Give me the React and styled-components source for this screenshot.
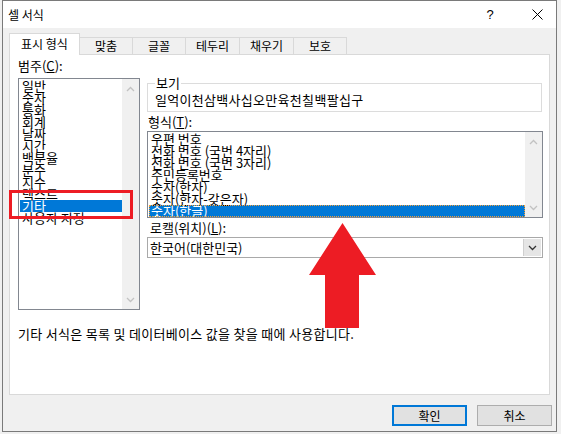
import styled, { createGlobalStyle } from "styled-components";

const categories = [
  "일반",
  "숫자",
  "통화",
  "회계",
  "날짜",
  "시간",
  "백분율",
  "분수",
  "지수",
  "텍스트",
  "기타",
  "사용자 지정",
];

const formats = [
  "우편 번호",
  "전화 번호 (국번 4자리)",
  "전화 번호 (국번 3자리)",
  "주민등록번호",
  "숫자(한자)",
  "숫자(한자-갖은자)",
  "숫자(한글)",
];

const tabs = [
  { label: "표시 형식", width: 71 },
  { label: "맞춤", width: 53 },
  { label: "글꼴", width: 53 },
  { label: "테두리", width: 54 },
  { label: "채우기", width: 54 },
  { label: "보호", width: 53 },
];

function Chevron({ down, color }) {
  return (
    <svg width="9" height="6" viewBox="0 0 9 6">
      <polyline
        points={down ? "1,1 4.5,4.5 8,1" : "1,5 4.5,1.5 8,5"}
        fill="none"
        stroke={color}
        strokeWidth="1.3"
      />
    </svg>
  );
}

function ListBox({ items, selected, height, focused }) {
  return (
    <ListFrame $height={height}>
      <Rows>
        {items.map((item, i) => (
          <Row key={item} $selected={i === selected} $focused={focused && i === selected}>
            {item}
          </Row>
        ))}
      </Rows>
      <ScrollBar>
        <Chevron color="#c2c2c2" />
        <Chevron down color="#c2c2c2" />
      </ScrollBar>
    </ListFrame>
  );
}

function App() {
  return (
    <>
      <GlobalStyle />
      <Window>
        <TitleBar>
          <Title>셀 서식</Title>
          <TitleButtons>
            <TitleButton>?</TitleButton>
            <TitleButton>
              <svg width="11" height="11" viewBox="0 0 11 11">
                <path d="M0.5 0.5 L10.5 10.5 M10.5 0.5 L0.5 10.5" stroke="#000" strokeWidth="1" />
              </svg>
            </TitleButton>
          </TitleButtons>
        </TitleBar>
        <Body>
          <TabRow>
            {tabs.map((tab, i) => (
              <Tab key={tab.label} $active={i === 0} $width={tab.width}>
                {tab.label}
              </Tab>
            ))}
          </TabRow>
          <Panel>
            <TopRow>
              <LeftColumn>
                <Label>
                  범주(<u>C</u>):
                </Label>
                <ListBox items={categories} selected={10} height={232} />
                <Highlight />
              </LeftColumn>
              <RightColumn>
                <SampleGroup>
                  <legend>보기</legend>
                  <SampleText>일억이천삼백사십오만육천칠백팔십구</SampleText>
                </SampleGroup>
                <Label $indent={1} $top={2}>
                  형식(<u>T</u>):
                </Label>
                <ListBox items={formats} selected={6} height={87} focused />
                <Label $indent={3} $top={2}>
                  로캘(위치)(<u>L</u>):
                </Label>
                <Combo>
                  <ComboText>한국어(대한민국)</ComboText>
                  <ComboButton>
                    <Chevron down color="#333" />
                  </ComboButton>
                </Combo>
                <Arrow width="67" height="105" viewBox="0 0 67 105">
                  <polygon points="33.5,0 0,52 16,52 16,105 50,105 50,52 67,52" fill="#ed1c24" />
                </Arrow>
              </RightColumn>
            </TopRow>
            <Description>기타 서식은 목록 및 데이터베이스 값을 찾을 때에 사용합니다.</Description>
          </Panel>
          <ButtonRow>
            <DialogButton $primary>확인</DialogButton>
            <DialogButton>취소</DialogButton>
          </ButtonRow>
        </Body>
      </Window>
    </>
  );
}

const GlobalStyle = createGlobalStyle`
  body {
    margin: 0;
    background: #f0f0f0;
    font-family: "Noto Sans CJK KR", "Noto Sans", sans-serif;
    font-size: 12px;
    color: #000;
  }
`;

const Window = styled.div`
  box-sizing: border-box;
  width: 555px;
  height: 432px;
  margin-left: 2px;
  border: 1px solid #7a7a7a;
  background: #f0f0f0;
  display: flex;
  flex-direction: column;
`;

const TitleBar = styled.div`
  height: 27px;
  background: #fff;
  display: flex;
  align-items: center;
  justify-content: space-between;
  padding-left: 5px;
`;

const Title = styled.span`
  font-size: 12px;
  line-height: 16px;
`;

const TitleButtons = styled.div`
  display: flex;
  gap: 9px;
  height: 100%;
`;

const TitleButton = styled.div`
  width: 38px;
  display: flex;
  align-items: center;
  justify-content: center;
  font-family: "Liberation Sans", sans-serif;
  font-size: 13px;
`;

const Body = styled.div`
  flex: 1;
  padding: 5px 4px 0 6px;
  display: flex;
  flex-direction: column;
`;

const TabRow = styled.div`
  display: flex;
  align-items: flex-end;
  height: 21px;
`;

const Tab = styled.div`
  box-sizing: border-box;
  width: ${({ $width }) => $width}px;
  height: ${({ $active }) => ($active ? 22 : 17)}px;
  margin-bottom: ${({ $active }) => ($active ? -1 : 0)}px;
  border: 1px solid #d9d9d9;
  border-bottom: none;
  border-left: ${({ $active }) => ($active ? "1px solid #d9d9d9" : "none")};
  background: ${({ $active }) => ($active ? "#fff" : "#f0f0f0")};
  position: relative;
  z-index: ${({ $active }) => ($active ? 1 : 0)};
  display: flex;
  align-items: center;
  justify-content: center;
  padding-bottom: ${({ $active }) => ($active ? 2 : 0)}px;
  line-height: 14px;
`;

const Panel = styled.div`
  box-sizing: border-box;
  width: 541px;
  height: 341px;
  border: 1px solid #d9d9d9;
  background: #fff;
  padding: 3px 5px 0 8px;
  display: flex;
  flex-direction: column;
  font-size: 13px;
`;

const TopRow = styled.div`
  display: flex;
  gap: 7px;
`;

const LeftColumn = styled.div`
  width: 122px;
  display: flex;
  flex-direction: column;
  position: relative;
`;

const RightColumn = styled.div`
  width: 396px;
  display: flex;
  flex-direction: column;
  position: relative;
`;

const Label = styled.div`
  line-height: 16px;
  padding-left: ${({ $indent }) => $indent || 0}px;
  margin-top: ${({ $top }) => $top || 0}px;
  margin-bottom: ${({ $top }) => ($top ? 1 : 4)}px;
`;

const ListFrame = styled.div`
  box-sizing: border-box;
  height: ${({ $height }) => $height}px;
  border: 1px solid #828790;
  display: flex;
  overflow: hidden;
`;

const Rows = styled.div`
  flex: 1;
  padding: 1px 0 0 1px;
  min-width: 0;
`;

const Row = styled.div`
  box-sizing: border-box;
  height: 12px;
  line-height: 12px;
  font-size: 13px;
  padding-left: 2px;
  white-space: nowrap;
  background: ${({ $selected }) => ($selected ? "#0078d7" : "transparent")};
  color: ${({ $selected }) => ($selected ? "#fff" : "#000")};
  outline: ${({ $focused }) => ($focused ? "1px dotted #f4a13a" : "none")};
  outline-offset: -1px;
`;

const ScrollBar = styled.div`
  width: 17px;
  background: #f0f0f0;
  display: flex;
  flex-direction: column;
  align-items: center;
  justify-content: space-between;
  padding: 7px 0 6px;
`;

const Highlight = styled.div`
  position: absolute;
  left: -9px;
  top: 132px;
  width: 124px;
  height: 29px;
  box-sizing: border-box;
  border: 3px solid #ed1c24;
  pointer-events: none;
`;

const SampleGroup = styled.fieldset`
  box-sizing: border-box;
  margin: 18px 0 0;
  height: 36px;
  width: 395px;
  border: 1px solid #dcdcdc;
  padding: 0 7px;
  min-width: 0;

  legend {
    padding: 0 1px;
    line-height: 14px;
  }
`;

const SampleText = styled.div`
  line-height: 16px;
  padding-top: 2px;
  letter-spacing: 0.3px;
`;

const Combo = styled.div`
  box-sizing: border-box;
  height: 21px;
  border: 1px solid #a9a9a9;
  display: flex;
  align-items: stretch;
`;

const ComboText = styled.div`
  flex: 1;
  padding-left: 2px;
  line-height: 19px;
`;

const ComboButton = styled.div`
  width: 17px;
  margin: 1px;
  background: #e5e5e5;
  border-left: 1px solid #cfcfcf;
  display: flex;
  align-items: center;
  justify-content: center;
`;

const Arrow = styled.svg`
  position: absolute;
  left: 162px;
  top: 165px;
`;

const Description = styled.div`
  margin-top: 16px;
  line-height: 16px;
  letter-spacing: 0.3px;
`;

const ButtonRow = styled.div`
  display: flex;
  justify-content: flex-end;
  gap: 10px;
  margin-top: 10px;
`;

const DialogButton = styled.button`
  box-sizing: border-box;
  width: 75px;
  height: 21px;
  background: #e1e1e1;
  border: ${({ $primary }) => ($primary ? "2px solid #0078d7" : "1px solid #adadad")};
  font-family: inherit;
  font-size: 12px;
  padding: 0;
  color: #000;
`;

export default App;
